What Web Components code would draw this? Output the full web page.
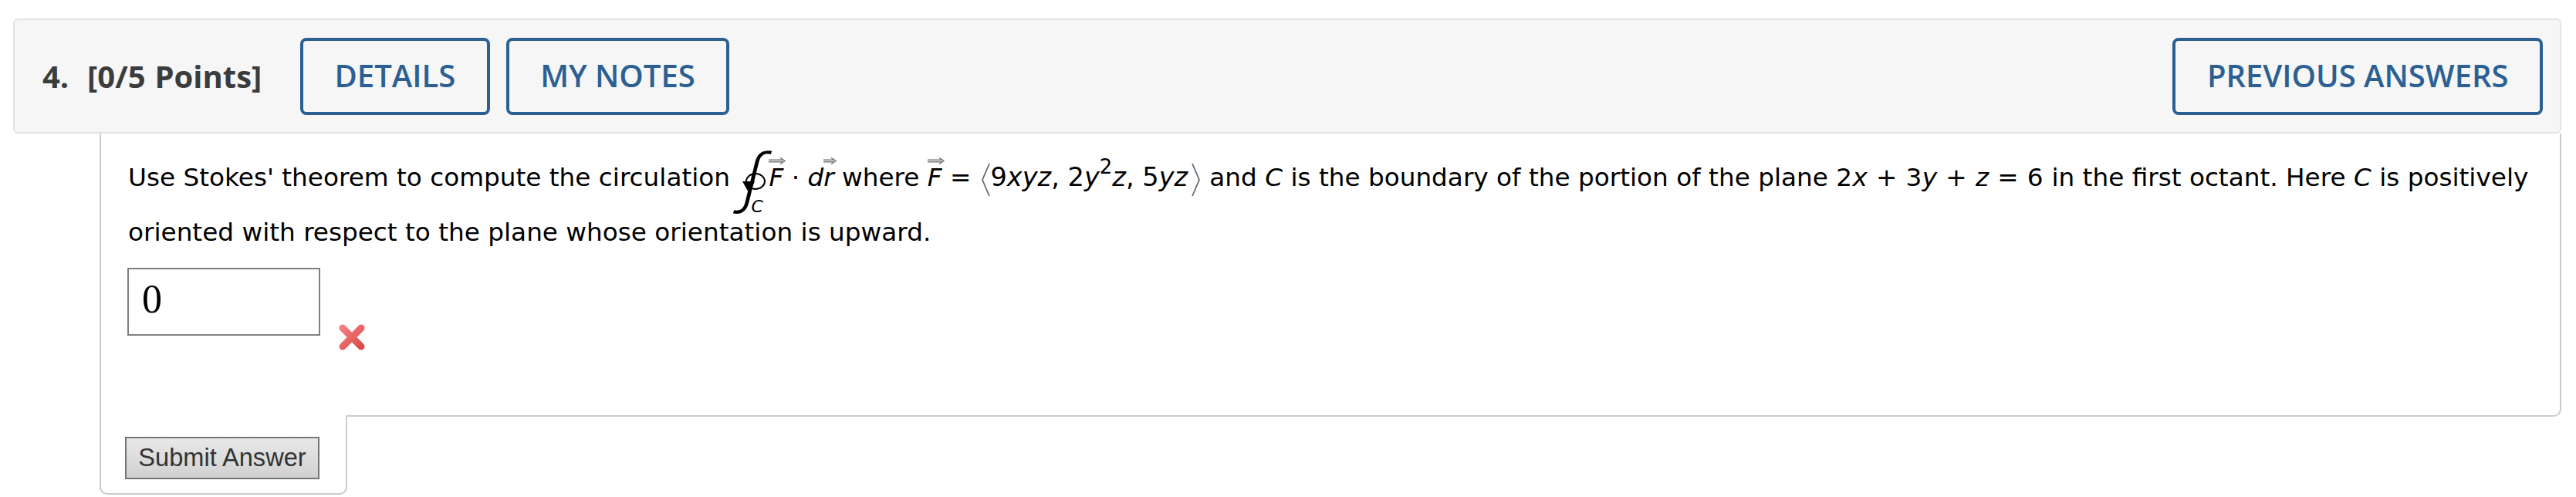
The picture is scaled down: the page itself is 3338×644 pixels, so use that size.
<!DOCTYPE html>
<html>
<head>
<meta charset="utf-8">
<title>Question 4</title>
<style>
  html, body { margin: 0; padding: 0; background: #fff; }
  body { width: 3338px; height: 644px; overflow: hidden; }
</style>
</head>
<body>
<question-card>
  <question-header slot="header" label="4.&nbsp; [0/5 Points]">
    <pill-button>DETAILS</pill-button>
    <pill-button>MY NOTES</pill-button>
    <pill-button slot="right">PREVIOUS ANSWERS</pill-button>
  </question-header>
  <question-text>Use Stokes' theorem to compute the circulation <circ-integral></circ-integral><vec-var w="22"><i>F</i></vec-var> <span>·</span> <i>d</i><vec-var w="17"><i>r</i></vec-var> where <vec-var w="22"><i>F</i></vec-var> = <tall-bracket></tall-bracket><math-run>9<i>xyz</i>, 2<i>y</i><sup>2</sup><i>z</i>, 5<i>yz</i></math-run><tall-bracket right></tall-bracket> and <i>C</i> is the boundary of the portion of the plane <span class="eq">2<i>x</i> + 3<i>y</i> + <i>z</i> = 6</span> in the first octant. Here <i>C</i> is positively<br>oriented with respect to the plane whose orientation is upward.</question-text>
  <answer-row value="0"></answer-row>
  <submit-tab slot="tab">Submit Answer</submit-tab>
</question-card>

<script>
class QuestionCard extends HTMLElement {
  constructor() {
    super();
    this.attachShadow({ mode: 'open' });
    this.shadowRoot.innerHTML = `
      <style>
        :host { display: block; padding: 24px 19px 0 17px; }
        .body {
          margin-left: 112px;
          height: 367px;
          box-sizing: border-box;
          border: solid #cbcbcb;
          border-width: 0 2px 2px 2px;
          border-bottom-right-radius: 10px;
          padding: 0 0 0 35px;
        }
      </style>
      <slot name="header"></slot>
      <div class="body"><slot></slot></div>
      <slot name="tab"></slot>
    `;
  }
}

class QuestionHeader extends HTMLElement {
  constructor() {
    super();
    this.attachShadow({ mode: 'open' });
    this.shadowRoot.innerHTML = `
      <style>
        :host {
          display: flex;
          align-items: center;
          height: 149px;
          box-sizing: border-box;
          background: #f6f6f6;
          border: 2px solid #e3e3e3;
          border-radius: 6px;
          padding: 0 22px 0 36px;
          font: 700 40px "Open Sans", sans-serif;
          color: #3c3c3c;
        }
        .label { width: 334px; white-space: pre; word-spacing: 1.5px; }
        .left { display: flex; gap: 21px; flex: 1; }
      </style>
      <div class="label"></div>
      <div class="left"><slot></slot></div>
      <slot name="right"></slot>
    `;
    this.shadowRoot.querySelector('.label').textContent = this.getAttribute('label');
  }
}

class PillButton extends HTMLElement {
  constructor() {
    super();
    this.attachShadow({ mode: 'open' });
    this.shadowRoot.innerHTML = `
      <style>
        :host {
          display: block;
          height: 100px;
          box-sizing: border-box;
          padding: 0 40.5px;
          border: 4px solid #2c6093;
          border-radius: 8px;
          color: #2c6093;
          font: 600 40px/90px "Open Sans", sans-serif;
          white-space: nowrap;
        }
      </style>
      <slot></slot>
    `;
  }
}

class QuestionText extends HTMLElement {
  constructor() {
    super();
    this.attachShadow({ mode: 'open' });
    this.shadowRoot.innerHTML = `
      <style>
        :host {
          display: block;
          padding-top: 21px;
          font: 32.7px/71px "DejaVu Sans", sans-serif;
          color: #000;
          white-space: nowrap;
        }
        ::slotted(.eq) { letter-spacing: .4px; }
      </style>
      <slot></slot>
    `;
  }
}

class MathRun extends HTMLElement {
  constructor() {
    super();
    this.attachShadow({ mode: 'open' });
    this.shadowRoot.innerHTML = `
      <style>
        :host { font-size: 33.6px; }
        ::slotted(sup) { font-size: 26px; line-height: 0; vertical-align: 16px; }
      </style>
      <slot></slot>
    `;
  }
}

class CircIntegral extends HTMLElement {
  constructor() {
    super();
    this.attachShadow({ mode: 'open' });
    this.shadowRoot.innerHTML = `
      <style>
        :host {
          display: inline-block;
          position: relative;
          width: 40px;
          height: 24px;
        }
        .int {
          position: absolute; left: 10px; top: -36px;
          font: 300 84px/100px Roboto, sans-serif;
          transform: skewX(-14deg);
        }
        .c {
          position: absolute; left: 17px; top: 38px;
          font: italic 22px/26px "DejaVu Sans", sans-serif;
        }
        svg { position: absolute; left: 0; top: 0; }
      </style>
      <span class="int">∫</span>
      <span class="c">C</span>
      <svg width="40" height="40" viewBox="0 0 40 40" fill="none">
        <ellipse cx="23" cy="18" rx="12" ry="10" stroke="#000" stroke-width="2"/>
        <path d="M6 18 L22 18 L15 34 Z" fill="#000"/>
      </svg>
    `;
  }
}

class VecVar extends HTMLElement {
  constructor() {
    super();
    this.attachShadow({ mode: 'open' });
    const w = this.getAttribute('w');
    this.shadowRoot.innerHTML = `
      <style>
        :host { display: inline-block; position: relative; line-height: 1; }
        svg { position: absolute; left: 0; top: -10px; }
      </style>
      <svg width="${w}" height="9" viewBox="0 0 ${w} 9" fill="none" stroke="#777" stroke-width="1.5">
        <path d="M0 3.2 H${w - 4} M0 5.8 H${w - 4} M${w - 7} .5 L${w - 1} 4.5 L${w - 7} 8.5"/>
      </svg>
      <slot></slot>
    `;
  }
}

class TallBracket extends HTMLElement {
  constructor() {
    super();
    this.attachShadow({ mode: 'open' });
    const right = this.hasAttribute('right');
    const d = right ? 'M1 1 L10 22 L1 43' : 'M10 1 L1 22 L10 43';
    this.shadowRoot.innerHTML = `
      <style>
        :host {
          display: inline-block;
          margin: ${right ? '0 2px 0 -6px' : '0 -10px 0 3px'};
          vertical-align: -14px;
          line-height: 0;
        }
        svg { display: block; }
      </style>
      <svg width="11" height="44" viewBox="0 0 11 44" fill="none" stroke="#6a6a6a" stroke-width="1.8">
        <path d="${d}"/>
      </svg>
    `;
  }
}

class AnswerRow extends HTMLElement {
  constructor() {
    super();
    this.attachShadow({ mode: 'open' });
    this.shadowRoot.innerHTML = `
      <style>
        :host { display: flex; align-items: flex-start; margin: 10px 0 0 -1px; }
        .field {
          width: 250px; height: 88px; box-sizing: border-box;
          border: 2px solid #808080;
          padding-left: 17px;
          font: 52px/78px "Liberation Serif", serif;
          color: #000;
        }
        svg { margin: 73px 0 0 24px; }
      </style>
      <div class="field"></div>
      <svg width="34" height="34" viewBox="0 0 34 34">
        <defs>
          <linearGradient id="g" x1="0" y1="0" x2="1" y2="1">
            <stop offset="0" stop-color="#f27f80"/>
            <stop offset="1" stop-color="#dd4b4b"/>
          </linearGradient>
        </defs>
        <path d="M5 5 L29 29 M29 5 L5 29" stroke="url(#g)" stroke-width="9" stroke-linecap="round"/>
      </svg>
    `;
    this.shadowRoot.querySelector('.field').textContent = this.getAttribute('value');
  }
}

class SubmitTab extends HTMLElement {
  constructor() {
    super();
    this.attachShadow({ mode: 'open' });
    this.shadowRoot.innerHTML = `
      <style>
        :host {
          display: block;
          position: relative;
          box-sizing: border-box;
          margin: -2px 0 0 112px;
          width: 321px;
          height: 103px;
          background: #fff;
          border: solid #cbcbcb;
          border-width: 0 2px 2px 2px;
          border-radius: 0 0 10px 10px;
          padding: 28px 0 0 31px;
        }
        .btn {
          width: 252px; height: 55px; box-sizing: border-box;
          border: 2px solid #757575;
          background: linear-gradient(#e9e9e9, #d0d0d0);
          color: #333;
          font: 32.6px/49px "Liberation Sans", sans-serif;
          text-align: center;
          white-space: nowrap;
        }
      </style>
      <div class="btn"><slot></slot></div>
    `;
  }
}

customElements.define('question-card', QuestionCard);
customElements.define('question-header', QuestionHeader);
customElements.define('pill-button', PillButton);
customElements.define('question-text', QuestionText);
customElements.define('math-run', MathRun);
customElements.define('circ-integral', CircIntegral);
customElements.define('vec-var', VecVar);
customElements.define('tall-bracket', TallBracket);
customElements.define('answer-row', AnswerRow);
customElements.define('submit-tab', SubmitTab);
</script>
</body>
</html>
